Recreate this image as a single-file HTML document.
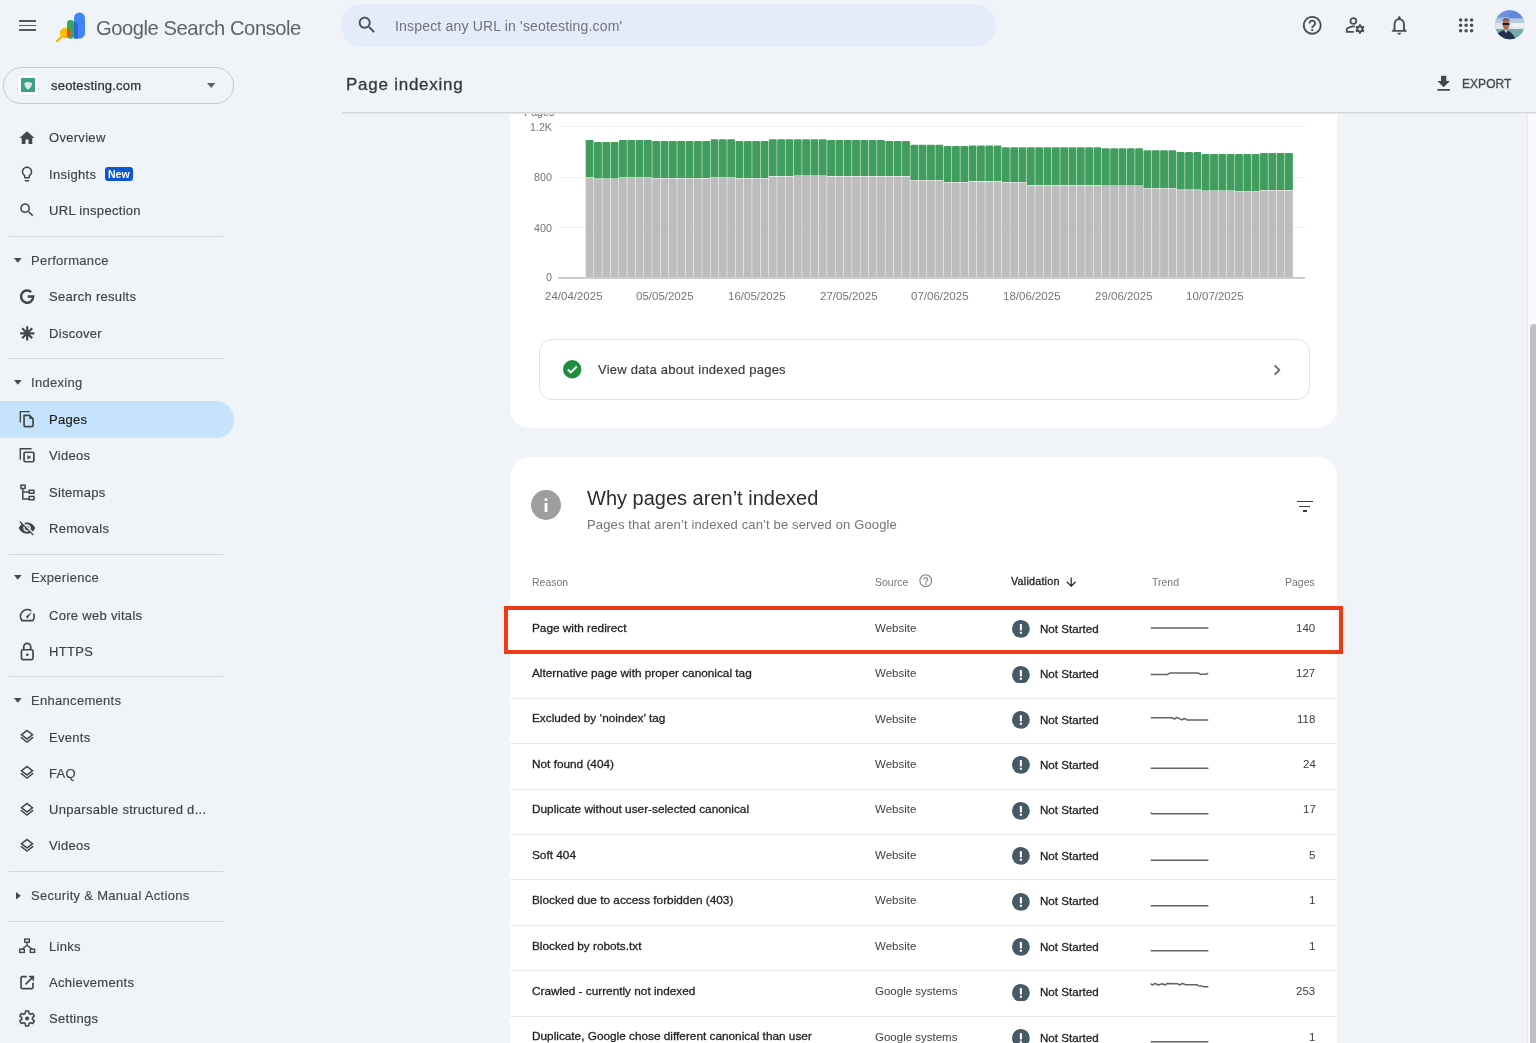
<!DOCTYPE html><html><head><meta charset="utf-8"><title>Page indexing</title><style>
html,body{margin:0;padding:0;}
body{width:1536px;height:1043px;overflow:hidden;background:#f0f4f9;font-family:"Liberation Sans", sans-serif;position:relative;}
.t{position:absolute;white-space:nowrap;will-change:transform;}
.r{position:absolute;}
</style></head><body>
<div class="r" style="left:19.00px;top:20.00px;width:16.50px;height:1.80px;background:#54575b;"></div>
<div class="r" style="left:19.00px;top:24.60px;width:16.50px;height:1.80px;background:#54575b;"></div>
<div class="r" style="left:19.00px;top:29.20px;width:16.50px;height:1.80px;background:#54575b;"></div>
<svg class="r" style="left:56.00px;top:12.00px;" width="30.00" height="30.00" viewBox="0 0 30 30">
<defs><clipPath id="gcl"><rect x="11" y="8" width="7.2" height="18.7" rx="3.6"/></clipPath></defs>
<path d="M5.2 25 L1.2 29" stroke="#f4b400" stroke-width="2.3" stroke-linecap="round"/>
<rect x="11" y="8" width="7.2" height="18.7" rx="3.6" fill="#34a853"/>
<rect x="18" y="0.4" width="11" height="26.3" rx="5.5" fill="#4285f4"/>
<path d="M18 9.2 Q21.6 10.5 22 14 V26.7 H18 Z" fill="#3266d5"/>
<circle cx="9.25" cy="21" r="5.35" fill="#fbbc04"/>
<circle cx="9.25" cy="21" r="5.35" fill="#ea4335" clip-path="url(#gcl)"/>
</svg>
<div class="t" style="left:96.00px;top:17.90px;font-size:20.2px;line-height:20.2px;color:#5f6368;letter-spacing:-0.45px;">Google Search Console</div>
<div class="r" style="left:341.00px;top:4.00px;width:655.00px;height:43.00px;background:#e4ebfa;border-radius:21.5px;"></div>
<svg class="r" style="left:356.00px;top:14.00px;" width="22.00" height="22.00" viewBox="0 0 24 24"><path fill="#4a4d51" d="M15.5 14h-.79l-.28-.27C15.41 12.59 16 11.11 16 9.5 16 5.91 13.09 3 9.5 3S3 5.91 3 9.5 5.91 16 9.5 16c1.61 0 3.09-.59 4.23-1.57l.27.28v.79l5 4.99L20.49 19l-4.99-5zm-6 0C7.01 14 5 11.99 5 9.5S7.01 5 9.5 5 14 7.01 14 9.5 11.99 14 9.5 14z"/></svg>
<div class="t" style="left:394.50px;top:19.15px;font-size:14px;line-height:14px;color:#6f7378;letter-spacing:0.18px;">Inspect any URL in 'seotesting.com'</div>
<svg class="r" style="left:1300.50px;top:14.00px;" width="22.50" height="22.50" viewBox="0 0 24 24"><path fill="#4a4d51" d="M11 18h2v-2h-2v2zm1-16C6.48 2 2 6.48 2 12s4.48 10 10 10 10-4.48 10-10S17.52 2 12 2zm0 18c-4.41 0-8-3.59-8-8s3.59-8 8-8 8 3.59 8 8-3.59 8-8 8zm0-14c-2.21 0-4 1.79-4 4h2c0-1.1.9-2 2-2s2 .9 2 2c0 2-3 1.75-3 5h2c0-2.25 3-2.5 3-5 0-2.21-1.79-4-4-4z"/></svg>
<svg class="r" style="left:1344.00px;top:14.00px;" width="22.50" height="22.50" viewBox="0 0 24 24"><g fill="none" stroke="#4a4d51" stroke-width="1.9">
<circle cx="10" cy="7.5" r="3.1"/>
<path d="M11.5 13.2 C8 12.8 5.5 14 3.6 15.2 C3 15.6 3 16.2 3 17 V19 H10.5"/>
</g>
<path fill="#4a4d51" d="M20.75 16c0-.22-.03-.42-.06-.63l1.14-1.01-1-1.73-1.45.49c-.32-.27-.68-.48-1.08-.63L18 11h-2l-.3 1.49c-.4.15-.76.36-1.08.63l-1.45-.49-1 1.73 1.14 1.01c-.03.21-.06.41-.06.63s.03.42.06.63l-1.14 1.01 1 1.730 1.45-.49c.32.27.68.48 1.08.63L16 21h2l.3-1.49c.4-.15.76-.36 1.08-.63l1.45.49 1-1.73-1.14-1.01c.03-.21.06-.41.06-.63zM17 17.6c-.88 0-1.6-.72-1.6-1.6s.72-1.6 1.6-1.6 1.6.72 1.6 1.6-.72 1.6-1.6 1.6z"/></svg>
<svg class="r" style="left:1388.00px;top:14.00px;" width="22.50" height="22.50" viewBox="0 0 24 24"><path fill="#4a4d51" d="M12 22c1.1 0 2-.9 2-2h-4c0 1.1.9 2 2 2zm6-6v-5c0-3.07-1.64-5.64-4.5-6.32V4c0-.83-.67-1.5-1.5-1.5s-1.5.67-1.5 1.5v.68C7.63 5.36 6 7.92 6 11v5l-2 2v1h16v-1l-2-2zm-2 1H8v-6c0-2.48 1.51-4.5 4-4.5s4 2.02 4 4.5v6z"/></svg>
<svg class="r" style="left:1455.00px;top:14.00px;" width="22.00" height="22.00" viewBox="0 0 22 22"><circle cx="5.60" cy="5.90" r="1.75" fill="#4a4d51"/><circle cx="11.10" cy="5.90" r="1.75" fill="#4a4d51"/><circle cx="16.60" cy="5.90" r="1.75" fill="#4a4d51"/><circle cx="5.60" cy="11.30" r="1.75" fill="#4a4d51"/><circle cx="11.10" cy="11.30" r="1.75" fill="#4a4d51"/><circle cx="16.60" cy="11.30" r="1.75" fill="#4a4d51"/><circle cx="5.60" cy="16.80" r="1.75" fill="#4a4d51"/><circle cx="11.10" cy="16.80" r="1.75" fill="#4a4d51"/><circle cx="16.60" cy="16.80" r="1.75" fill="#4a4d51"/></svg>
<svg class="r" style="left:1495.00px;top:10.40px;" width="29.50" height="29.50" viewBox="0 0 29.5 29.5"><defs><clipPath id="av"><circle cx="14.75" cy="14.75" r="14.6"/></clipPath></defs>
<g clip-path="url(#av)">
<rect width="30" height="30" fill="#8fb0dc"/>
<rect width="30" height="7" fill="#6d92e0"/>
<rect x="14" y="2" width="16" height="6" fill="#5f88de"/>
<rect y="9" width="30" height="4" fill="#b9c9de"/>
<rect y="13" width="30" height="6" fill="#dfe6ec"/>
<rect y="19" width="30" height="11" fill="#79a8b0"/>
<rect x="18" y="13" width="12" height="4" fill="#eef2f4"/>
<ellipse cx="11" cy="14.5" rx="3.4" ry="5.2" fill="#a8735c"/>
<path d="M7.6 11.5 Q11 7.6 14.4 11.5 L14.4 10 Q11 6.5 7.6 10Z" fill="#5a3d2c"/>
<rect x="7.6" y="13" width="6.8" height="2.1" rx="0.6" fill="#1d1d22"/>
<path d="M-1 30 C1 24 5 20.5 10 20 C14 20.5 18 23 21 30 Z" fill="#25304f"/>
<path d="M9 20 L11 23 L13 20.3Z" fill="#d9d2cc"/>
</g></svg>
<div class="r" style="left:2.50px;top:67.00px;width:231.00px;height:36.50px;box-sizing:border-box;border:1px solid #c6c8ca;border-radius:18.25px;"></div>
<div class="r" style="left:17.80px;top:74.80px;width:20.50px;height:20.50px;background:#fff;border-radius:2px;box-shadow:0 0 0 0.6px #e3e3e3;"></div>
<div class="r" style="left:21.00px;top:78.00px;width:14.30px;height:14.00px;background:#3d9f8a;"></div>
<svg class="r" style="left:21.00px;top:78.00px;" width="14.30" height="14.00" viewBox="0 0 14.3 14"><path d="M3.2 5.2 Q7.15 2.6 11.1 5.2 Q10.6 9.6 7.15 11.6 Q3.7 9.6 3.2 5.2Z" fill="#dfe7ea"/></svg>
<div class="t" style="left:50.60px;top:79.00px;font-size:13px;line-height:13px;color:#2e3033;letter-spacing:0.2px;-webkit-text-stroke:0.25px #2e3033;">seotesting.com</div>
<svg class="r" style="left:207.00px;top:83.00px;" width="8.40" height="5.00" viewBox="0 0 8.4 5"><path fill="#5f6368" d="M0 0H8.4L4.2 5Z"/></svg>
<div class="t" style="left:49.00px;top:131.40px;font-size:13px;line-height:13px;color:#3c4043;letter-spacing:0.3px;-webkit-text-stroke:0.15px #3c4043;">Overview</div>
<svg class="r" style="left:17.50px;top:128.80px;" width="18.00" height="18.00" viewBox="0 0 24 24"><path fill="#444746" d="M10 20v-6h4v6h5v-8h3L12 3 2 12h3v8z"/></svg>
<div class="t" style="left:49.00px;top:167.50px;font-size:13px;line-height:13px;color:#3c4043;letter-spacing:0.3px;-webkit-text-stroke:0.15px #3c4043;">Insights</div>
<svg class="r" style="left:17.50px;top:164.90px;" width="18.00" height="18.00" viewBox="0 0 24 24"><path fill="#444746" d="M9 21c0 .55.45 1 1 1h4c.55 0 1-.45 1-1v-1H9v1zm3-19C8.14 2 5 5.14 5 9c0 2.38 1.19 4.470 3 5.74V17c0 .55.45 1 1 1h6c.55 0 1-.45 1-1v-2.26c1.81-1.27 3-3.36 3-5.74 0-3.86-3.14-7-7-7zm2.85 11.1l-.85.6V16h-4v-2.3l-.85-.6C7.8 12.16 7 10.63 7 9c0-2.76 2.24-5 5-5s5 2.24 5 5c0 1.63-.8 3.16-2.15 4.1z"/></svg>
<div class="r" style="left:105.30px;top:167.00px;width:27.80px;height:14.20px;background:#0b57d0;border-radius:3px;"></div>
<div class="t" style="left:108.30px;top:169.31px;font-size:10.5px;line-height:10.5px;color:#fff;font-weight:bold;">New</div>
<div class="t" style="left:49.00px;top:204.00px;font-size:13px;line-height:13px;color:#3c4043;letter-spacing:0.3px;-webkit-text-stroke:0.15px #3c4043;">URL inspection</div>
<svg class="r" style="left:17.50px;top:201.40px;" width="18.00" height="18.00" viewBox="0 0 24 24"><path fill="#444746" d="M15.5 14h-.79l-.28-.27C15.41 12.59 16 11.11 16 9.5 16 5.91 13.09 3 9.5 3S3 5.91 3 9.5 5.91 16 9.5 16c1.61 0 3.09-.59 4.23-1.57l.27.28v.79l5 4.99L20.49 19l-4.99-5zm-6 0C7.01 14 5 11.99 5 9.5S7.01 5 9.5 5 14 7.01 14 9.5 11.99 14 9.5 14z"/></svg>
<div class="r" style="left:9.00px;top:235.75px;width:214.00px;height:1.00px;background:#d3d6da;"></div>
<div class="t" style="left:31.25px;top:253.80px;font-size:13px;line-height:13px;color:#444746;letter-spacing:0.3px;-webkit-text-stroke:0.15px #444746;">Performance</div>
<svg class="r" style="left:14.20px;top:257.60px;" width="7.60" height="5.00" viewBox="0 0 7.6 5"><path fill="#444746" d="M0 0H7.6L3.8 4.8Z"/></svg>
<div class="t" style="left:49.00px;top:290.20px;font-size:13px;line-height:13px;color:#3c4043;letter-spacing:0.3px;-webkit-text-stroke:0.15px #3c4043;">Search results</div>
<svg class="r" style="left:14.00px;top:281.20px;" width="26.00" height="26.00" viewBox="0 0 26 26"><path fill="none" stroke="#444746" stroke-width="2.5" d="M17.18 11.07 A6.1 6.1 0 1 0 19.20 15.60 H13.70"/></svg>
<div class="t" style="left:49.00px;top:326.60px;font-size:13px;line-height:13px;color:#3c4043;letter-spacing:0.3px;-webkit-text-stroke:0.15px #3c4043;">Discover</div>
<svg class="r" style="left:14.00px;top:317.60px;" width="26.00" height="26.00" viewBox="0 0 26 26"><path stroke="#444746" stroke-width="2.2" d="M20.30 15.30L6.10 15.30M18.22 20.32L8.18 10.28M13.20 22.40L13.20 8.20M8.18 20.32L18.22 10.28"/><circle cx="13.2" cy="15.3" r="2.6" fill="#444746"/></svg>
<div class="r" style="left:9.00px;top:358.30px;width:214.00px;height:1.00px;background:#d3d6da;"></div>
<div class="t" style="left:31.25px;top:376.30px;font-size:13px;line-height:13px;color:#444746;letter-spacing:0.3px;-webkit-text-stroke:0.15px #444746;">Indexing</div>
<svg class="r" style="left:14.20px;top:380.10px;" width="7.60" height="5.00" viewBox="0 0 7.6 5"><path fill="#444746" d="M0 0H7.6L3.8 4.8Z"/></svg>
<div class="r" style="left:0.00px;top:401.25px;width:234.40px;height:36.25px;background:#c6e3fd;border-radius:0 18px 18px 0;"></div>
<div class="t" style="left:49.00px;top:412.70px;font-size:13px;line-height:13px;color:#1f1f1f;letter-spacing:0.3px;-webkit-text-stroke:0.2px #1f1f1f;">Pages</div>
<svg class="r" style="left:14.00px;top:403.70px;" width="26.00" height="26.00" viewBox="0 0 26 26"><g fill="none" stroke="#444746" stroke-width="1.7" stroke-linejoin="round"><path d="M6.3 18.6 V7.6 H15.8" stroke-width="1.4"/><path d="M10.05 11.35 H15.6 L19.05 14.8 V21.3 Q19.05 22.65 17.7 22.65 H11.4 Q10.05 22.65 10.05 21.3 Z"/></g><path d="M15.3 11.2 L19.2 15.1 H15.3Z" fill="#444746"/></svg>
<div class="t" style="left:49.00px;top:449.00px;font-size:13px;line-height:13px;color:#3c4043;letter-spacing:0.3px;-webkit-text-stroke:0.15px #3c4043;">Videos</div>
<svg class="r" style="left:14.00px;top:440.00px;" width="26.00" height="26.00" viewBox="0 0 26 26"><g fill="none" stroke="#444746" stroke-width="1.7"><path d="M6.3 19.7 V8.8 H17.6" stroke-width="1.4"/><rect x="10.05" y="12.25" width="9.8" height="9.5" rx="1.3"/></g><path d="M13.5 15.1 L17.3 17.25 L13.5 19.4 Z" fill="#444746"/></svg>
<div class="t" style="left:49.00px;top:485.50px;font-size:13px;line-height:13px;color:#3c4043;letter-spacing:0.3px;-webkit-text-stroke:0.15px #3c4043;">Sitemaps</div>
<svg class="r" style="left:14.00px;top:476.50px;" width="26.00" height="26.00" viewBox="0 0 26 26"><g fill="none" stroke="#444746" stroke-width="1.5"><rect x="6.95" y="8.15" width="4.1" height="3.3"/><rect x="15.25" y="13.25" width="4.7" height="3.0"/><rect x="15.25" y="19.45" width="4.7" height="3.3"/><path d="M8.8 11.5 V22 H15.2 M8.8 14.9 H15.2"/></g></svg>
<div class="t" style="left:49.00px;top:521.80px;font-size:13px;line-height:13px;color:#3c4043;letter-spacing:0.3px;-webkit-text-stroke:0.15px #3c4043;">Removals</div>
<svg class="r" style="left:17.50px;top:519.20px;" width="18.00" height="18.00" viewBox="0 0 24 24"><path fill="#444746" d="M12 7c2.76 0 5 2.24 5 5 0 .65-.13 1.26-.36 1.83l2.92 2.92c1.51-1.26 2.7-2.89 3.43-4.75-1.73-4.39-6-7.5-11-7.5-1.4 0-2.74.25-3.98.7l2.16 2.16C10.74 7.13 11.35 7 12 7zM2 4.27l2.28 2.28.46.46C3.08 8.3 1.78 10.02 1 12c1.73 4.39 6 7.5 11 7.5 1.55 0 3.03-.3 4.38-.84l.42.42L19.730 22 21 20.73 3.27 3 2 4.27zM7.53 9.8l1.55 1.55c-.05.21-.08.43-.08.65 0 1.66 1.34 3 3 3 .22 0 .44-.03.65-.08l1.55 1.55c-.67.33-1.41.53-2.2.53-2.76 0-5-2.24-5-5 0-.79.2-1.53.53-2.2zm4.31-.78l3.15 3.15.02-.16c0-1.66-1.34-3-3-3l-.17.01z"/></svg>
<div class="r" style="left:9.00px;top:553.70px;width:214.00px;height:1.00px;background:#d3d6da;"></div>
<div class="t" style="left:31.25px;top:571.40px;font-size:13px;line-height:13px;color:#444746;letter-spacing:0.3px;-webkit-text-stroke:0.15px #444746;">Experience</div>
<svg class="r" style="left:14.20px;top:575.20px;" width="7.60" height="5.00" viewBox="0 0 7.6 5"><path fill="#444746" d="M0 0H7.6L3.8 4.8Z"/></svg>
<div class="t" style="left:49.00px;top:608.50px;font-size:13px;line-height:13px;color:#3c4043;letter-spacing:0.3px;-webkit-text-stroke:0.15px #3c4043;">Core web vitals</div>
<svg class="r" style="left:14.00px;top:599.50px;" width="26.00" height="26.00" viewBox="0 0 26 26"><path fill="none" stroke="#444746" stroke-width="1.7" stroke-linejoin="round" d="M17.25 10.88 A6.8 6.8 0 0 0 7.99 20.65 H18.71 A6.8 6.8 0 0 0 19.51 13.58"/><path fill="#444746" d="M12.2 16.3 L17.9 11.9 L13.9 17.9 A1.2 1.2 0 0 1 12.2 16.3Z"/></svg>
<div class="t" style="left:49.00px;top:644.50px;font-size:13px;line-height:13px;color:#3c4043;letter-spacing:0.3px;-webkit-text-stroke:0.15px #3c4043;">HTTPS</div>
<svg class="r" style="left:14.00px;top:635.50px;" width="26.00" height="26.00" viewBox="0 0 26 26"><g fill="none" stroke="#444746" stroke-width="1.7"><rect x="7.45" y="13.75" width="11.6" height="9.8" rx="1.5"/><path d="M9.75 13.75 V10.85 A3.5 3.5 0 0 1 16.75 10.85 V13.75"/></g><circle cx="13.3" cy="18.7" r="1.3" fill="#444746"/></svg>
<div class="r" style="left:9.00px;top:675.90px;width:214.00px;height:1.00px;background:#d3d6da;"></div>
<div class="t" style="left:31.25px;top:694.40px;font-size:13px;line-height:13px;color:#444746;letter-spacing:0.3px;-webkit-text-stroke:0.15px #444746;">Enhancements</div>
<svg class="r" style="left:14.20px;top:698.20px;" width="7.60" height="5.00" viewBox="0 0 7.6 5"><path fill="#444746" d="M0 0H7.6L3.8 4.8Z"/></svg>
<div class="t" style="left:49.00px;top:730.80px;font-size:13px;line-height:13px;color:#3c4043;letter-spacing:0.3px;-webkit-text-stroke:0.15px #3c4043;">Events</div>
<svg class="r" style="left:17.50px;top:728.20px;" width="18.00" height="18.00" viewBox="0 0 24 24"><path fill="#444746" d="M12 16l7.36-5.73L21 9l-9-7-9 7 1.63 1.27L12 16zm0-11.47L17.74 9 12 13.47 6.26 9 12 4.53zm-.01 13.01l-7.37-5.73L3 13.07l9 7 9-7-1.63-1.27-7.38 5.74z"/></svg>
<div class="t" style="left:49.00px;top:766.80px;font-size:13px;line-height:13px;color:#3c4043;letter-spacing:0.3px;-webkit-text-stroke:0.15px #3c4043;">FAQ</div>
<svg class="r" style="left:17.50px;top:764.20px;" width="18.00" height="18.00" viewBox="0 0 24 24"><path fill="#444746" d="M12 16l7.36-5.73L21 9l-9-7-9 7 1.63 1.27L12 16zm0-11.47L17.74 9 12 13.47 6.26 9 12 4.53zm-.01 13.01l-7.37-5.73L3 13.07l9 7 9-7-1.63-1.27-7.38 5.74z"/></svg>
<div class="t" style="left:49.00px;top:803.30px;font-size:13px;line-height:13px;color:#3c4043;letter-spacing:0.3px;-webkit-text-stroke:0.15px #3c4043;">Unparsable structured d...</div>
<svg class="r" style="left:17.50px;top:800.70px;" width="18.00" height="18.00" viewBox="0 0 24 24"><path fill="#444746" d="M12 16l7.36-5.73L21 9l-9-7-9 7 1.63 1.27L12 16zm0-11.47L17.74 9 12 13.47 6.26 9 12 4.53zm-.01 13.01l-7.37-5.73L3 13.07l9 7 9-7-1.63-1.27-7.38 5.74z"/></svg>
<div class="t" style="left:49.00px;top:839.20px;font-size:13px;line-height:13px;color:#3c4043;letter-spacing:0.3px;-webkit-text-stroke:0.15px #3c4043;">Videos</div>
<svg class="r" style="left:17.50px;top:836.60px;" width="18.00" height="18.00" viewBox="0 0 24 24"><path fill="#444746" d="M12 16l7.36-5.73L21 9l-9-7-9 7 1.63 1.27L12 16zm0-11.47L17.74 9 12 13.47 6.26 9 12 4.53zm-.01 13.01l-7.37-5.73L3 13.07l9 7 9-7-1.63-1.27-7.38 5.74z"/></svg>
<div class="r" style="left:9.00px;top:871.20px;width:214.00px;height:1.00px;background:#d3d6da;"></div>
<div class="t" style="left:31.25px;top:889.40px;font-size:13px;line-height:13px;color:#444746;letter-spacing:0.3px;-webkit-text-stroke:0.15px #444746;">Security &amp; Manual Actions</div>
<svg class="r" style="left:16.20px;top:891.70px;" width="5.00" height="7.60" viewBox="0 0 5 7.6"><path fill="#444746" d="M0 0V7.6L4.8 3.8Z"/></svg>
<div class="r" style="left:9.00px;top:921.20px;width:214.00px;height:1.00px;background:#d3d6da;"></div>
<div class="t" style="left:49.00px;top:939.60px;font-size:13px;line-height:13px;color:#3c4043;letter-spacing:0.3px;-webkit-text-stroke:0.15px #3c4043;">Links</div>
<svg class="r" style="left:14.00px;top:930.60px;" width="26.00" height="26.00" viewBox="0 0 26 26"><g fill="none" stroke="#444746" stroke-width="1.4"><rect x="10.7" y="8.1" width="4.6" height="3.1"/><rect x="5.7" y="18.2" width="4.6" height="3.2"/><rect x="16.3" y="18.2" width="4.3" height="3.2"/><path d="M13 11.2 V14.2 L8 18.2 M13 14.2 L18.4 18.2"/></g></svg>
<div class="t" style="left:49.00px;top:975.50px;font-size:13px;line-height:13px;color:#3c4043;letter-spacing:0.3px;-webkit-text-stroke:0.15px #3c4043;">Achievements</div>
<svg class="r" style="left:14.00px;top:966.50px;" width="26.00" height="26.00" viewBox="0 0 26 26"><g fill="none" stroke="#444746" stroke-width="1.7"><path d="M12.8 9.65 H8.4 Q7.05 9.65 7.05 11 V20.2 Q7.05 21.55 8.4 21.55 H17.6 Q18.95 21.55 18.95 20.2 V15.8"/><path d="M15.1 9.65 H19.25 V13.8 M19.25 9.65 L11.6 17.3"/></g></svg>
<div class="t" style="left:49.00px;top:1011.80px;font-size:13px;line-height:13px;color:#3c4043;letter-spacing:0.3px;-webkit-text-stroke:0.15px #3c4043;">Settings</div>
<svg class="r" style="left:14.00px;top:1002.80px;" width="26.00" height="26.00" viewBox="0 0 26 26"><path fill="none" stroke="#444746" stroke-width="1.6" stroke-linejoin="round" d="M11.20 10.45 L11.59 8.05 L14.61 8.05 L15.00 10.45 L16.53 11.33 L18.80 10.47 L20.31 13.08 L18.43 14.62 L18.43 16.38 L20.31 17.92 L18.80 20.53 L16.53 19.67 L15.00 20.55 L14.61 22.95 L11.59 22.95 L11.20 20.55 L9.67 19.67 L7.40 20.53 L5.89 17.92 L7.77 16.38 L7.77 14.62 L5.89 13.08 L7.40 10.47 L9.67 11.33Z"/><circle cx="13.1" cy="15.5" r="2.0" fill="#444746"/></svg>
<div class="r" style="left:510.00px;top:60.00px;width:827.00px;height:368.10px;background:#fff;border-radius:20px;"></div>
<div class="t" style="left:524.00px;top:107.44px;font-size:10.7px;line-height:10.7px;color:#5f6368;">Pages</div>
<div class="r" style="left:558.00px;top:126.40px;width:747.00px;height:1.00px;background:#f0f0f0;"></div>
<div class="r" style="left:558.00px;top:176.50px;width:747.00px;height:1.00px;background:#f0f0f0;"></div>
<div class="r" style="left:558.00px;top:226.80px;width:747.00px;height:1.00px;background:#f0f0f0;"></div>
<div class="t" style="right:983.70px;top:121.94px;font-size:10.7px;line-height:10.7px;color:#757575;text-align:right;">1.2K</div>
<div class="t" style="right:983.70px;top:171.64px;font-size:10.7px;line-height:10.7px;color:#757575;text-align:right;">800</div>
<div class="t" style="right:983.70px;top:222.54px;font-size:10.7px;line-height:10.7px;color:#757575;text-align:right;">400</div>
<div class="t" style="right:983.70px;top:272.34px;font-size:10.7px;line-height:10.7px;color:#757575;text-align:right;">0</div>
<svg class="r" style="left:0;top:0" width="1536" height="300" viewBox="0 0 1536 300"><path d="M585.70 177.00V141.30Q585.70 140.10 586.90 140.10H592.35Q593.55 140.10 593.55 141.30V177.00Z" fill="#409d5d"/><rect x="585.70" y="177.50" width="7.85" height="100.40" fill="#bdbdbd"/><path d="M594.03 178.60V143.20Q594.03 142.00 595.23 142.00H600.68Q601.88 142.00 601.88 143.20V178.60Z" fill="#409d5d"/><rect x="594.03" y="179.10" width="7.85" height="98.80" fill="#bdbdbd"/><path d="M602.35 178.60V143.20Q602.35 142.00 603.55 142.00H609.00Q610.20 142.00 610.20 143.20V178.60Z" fill="#409d5d"/><rect x="602.35" y="179.10" width="7.85" height="98.80" fill="#bdbdbd"/><path d="M610.68 178.60V143.20Q610.68 142.00 611.88 142.00H617.33Q618.53 142.00 618.53 143.20V178.60Z" fill="#409d5d"/><rect x="610.68" y="179.10" width="7.85" height="98.80" fill="#bdbdbd"/><path d="M619.00 177.20V141.30Q619.00 140.10 620.20 140.10H625.65Q626.85 140.10 626.85 141.30V177.20Z" fill="#409d5d"/><rect x="619.00" y="177.70" width="7.85" height="100.20" fill="#bdbdbd"/><path d="M627.33 177.20V141.30Q627.33 140.10 628.53 140.10H633.98Q635.18 140.10 635.18 141.30V177.20Z" fill="#409d5d"/><rect x="627.33" y="177.70" width="7.85" height="100.20" fill="#bdbdbd"/><path d="M635.65 177.20V141.30Q635.65 140.10 636.85 140.10H642.30Q643.50 140.10 643.50 141.30V177.20Z" fill="#409d5d"/><rect x="635.65" y="177.70" width="7.85" height="100.20" fill="#bdbdbd"/><path d="M643.98 177.20V141.30Q643.98 140.10 645.18 140.10H650.62Q651.83 140.10 651.83 141.30V177.20Z" fill="#409d5d"/><rect x="643.98" y="177.70" width="7.85" height="100.20" fill="#bdbdbd"/><path d="M652.30 178.00V142.30Q652.30 141.10 653.50 141.10H658.95Q660.15 141.10 660.15 142.30V178.00Z" fill="#409d5d"/><rect x="652.30" y="178.50" width="7.85" height="99.40" fill="#bdbdbd"/><path d="M660.62 178.00V142.30Q660.62 141.10 661.83 141.10H667.27Q668.48 141.10 668.48 142.30V178.00Z" fill="#409d5d"/><rect x="660.62" y="178.50" width="7.85" height="99.40" fill="#bdbdbd"/><path d="M668.95 178.00V142.30Q668.95 141.10 670.15 141.10H675.60Q676.80 141.10 676.80 142.30V178.00Z" fill="#409d5d"/><rect x="668.95" y="178.50" width="7.85" height="99.40" fill="#bdbdbd"/><path d="M677.28 178.00V142.30Q677.28 141.10 678.48 141.10H683.93Q685.13 141.10 685.13 142.30V178.00Z" fill="#409d5d"/><rect x="677.28" y="178.50" width="7.85" height="99.40" fill="#bdbdbd"/><path d="M685.60 178.00V142.30Q685.60 141.10 686.80 141.10H692.25Q693.45 141.10 693.45 142.30V178.00Z" fill="#409d5d"/><rect x="685.60" y="178.50" width="7.85" height="99.40" fill="#bdbdbd"/><path d="M693.93 178.00V142.30Q693.93 141.10 695.13 141.10H700.58Q701.78 141.10 701.78 142.30V178.00Z" fill="#409d5d"/><rect x="693.93" y="178.50" width="7.85" height="99.40" fill="#bdbdbd"/><path d="M702.25 178.00V142.30Q702.25 141.10 703.45 141.10H708.90Q710.10 141.10 710.10 142.30V178.00Z" fill="#409d5d"/><rect x="702.25" y="178.50" width="7.85" height="99.40" fill="#bdbdbd"/><path d="M710.58 177.20V140.50Q710.58 139.30 711.78 139.30H717.23Q718.43 139.30 718.43 140.50V177.20Z" fill="#409d5d"/><rect x="710.58" y="177.70" width="7.85" height="100.20" fill="#bdbdbd"/><path d="M718.90 177.20V140.50Q718.90 139.30 720.10 139.30H725.55Q726.75 139.30 726.75 140.50V177.20Z" fill="#409d5d"/><rect x="718.90" y="177.70" width="7.85" height="100.20" fill="#bdbdbd"/><path d="M727.23 177.20V140.50Q727.23 139.30 728.43 139.30H733.88Q735.08 139.30 735.08 140.50V177.20Z" fill="#409d5d"/><rect x="727.23" y="177.70" width="7.85" height="100.20" fill="#bdbdbd"/><path d="M735.55 178.00V142.30Q735.55 141.10 736.75 141.10H742.20Q743.40 141.10 743.40 142.30V178.00Z" fill="#409d5d"/><rect x="735.55" y="178.50" width="7.85" height="99.40" fill="#bdbdbd"/><path d="M743.88 178.00V142.30Q743.88 141.10 745.08 141.10H750.52Q751.73 141.10 751.73 142.30V178.00Z" fill="#409d5d"/><rect x="743.88" y="178.50" width="7.85" height="99.40" fill="#bdbdbd"/><path d="M752.20 178.00V142.30Q752.20 141.10 753.40 141.10H758.85Q760.05 141.10 760.05 142.30V178.00Z" fill="#409d5d"/><rect x="752.20" y="178.50" width="7.85" height="99.40" fill="#bdbdbd"/><path d="M760.53 178.00V142.30Q760.53 141.10 761.73 141.10H767.18Q768.38 141.10 768.38 142.30V178.00Z" fill="#409d5d"/><rect x="760.53" y="178.50" width="7.85" height="99.40" fill="#bdbdbd"/><path d="M768.85 176.10V140.50Q768.85 139.30 770.05 139.30H775.50Q776.70 139.30 776.70 140.50V176.10Z" fill="#409d5d"/><rect x="768.85" y="176.60" width="7.85" height="101.30" fill="#bdbdbd"/><path d="M777.18 176.10V140.50Q777.18 139.30 778.38 139.30H783.83Q785.03 139.30 785.03 140.50V176.10Z" fill="#409d5d"/><rect x="777.18" y="176.60" width="7.85" height="101.30" fill="#bdbdbd"/><path d="M785.50 176.10V140.50Q785.50 139.30 786.70 139.30H792.15Q793.35 139.30 793.35 140.50V176.10Z" fill="#409d5d"/><rect x="785.50" y="176.60" width="7.85" height="101.30" fill="#bdbdbd"/><path d="M793.83 175.40V140.50Q793.83 139.30 795.03 139.30H800.48Q801.68 139.30 801.68 140.50V175.40Z" fill="#409d5d"/><rect x="793.83" y="175.90" width="7.85" height="102.00" fill="#bdbdbd"/><path d="M802.15 175.40V140.50Q802.15 139.30 803.35 139.30H808.80Q810.00 139.30 810.00 140.50V175.40Z" fill="#409d5d"/><rect x="802.15" y="175.90" width="7.85" height="102.00" fill="#bdbdbd"/><path d="M810.48 175.40V140.50Q810.48 139.30 811.68 139.30H817.12Q818.33 139.30 818.33 140.50V175.40Z" fill="#409d5d"/><rect x="810.48" y="175.90" width="7.85" height="102.00" fill="#bdbdbd"/><path d="M818.80 175.40V140.50Q818.80 139.30 820.00 139.30H825.45Q826.65 139.30 826.65 140.50V175.40Z" fill="#409d5d"/><rect x="818.80" y="175.90" width="7.85" height="102.00" fill="#bdbdbd"/><path d="M827.12 176.10V141.30Q827.12 140.10 828.33 140.10H833.77Q834.98 140.10 834.98 141.30V176.10Z" fill="#409d5d"/><rect x="827.12" y="176.60" width="7.85" height="101.30" fill="#bdbdbd"/><path d="M835.45 176.10V141.30Q835.45 140.10 836.65 140.10H842.10Q843.30 140.10 843.30 141.30V176.10Z" fill="#409d5d"/><rect x="835.45" y="176.60" width="7.85" height="101.30" fill="#bdbdbd"/><path d="M843.78 176.10V141.30Q843.78 140.10 844.98 140.10H850.43Q851.63 140.10 851.63 141.30V176.10Z" fill="#409d5d"/><rect x="843.78" y="176.60" width="7.85" height="101.30" fill="#bdbdbd"/><path d="M852.10 176.10V141.30Q852.10 140.10 853.30 140.10H858.75Q859.95 140.10 859.95 141.30V176.10Z" fill="#409d5d"/><rect x="852.10" y="176.60" width="7.85" height="101.30" fill="#bdbdbd"/><path d="M860.42 176.10V141.30Q860.42 140.10 861.62 140.10H867.07Q868.27 140.10 868.27 141.30V176.10Z" fill="#409d5d"/><rect x="860.42" y="176.60" width="7.85" height="101.30" fill="#bdbdbd"/><path d="M868.75 176.10V141.30Q868.75 140.10 869.95 140.10H875.40Q876.60 140.10 876.60 141.30V176.10Z" fill="#409d5d"/><rect x="868.75" y="176.60" width="7.85" height="101.30" fill="#bdbdbd"/><path d="M877.08 176.10V141.30Q877.08 140.10 878.28 140.10H883.73Q884.93 140.10 884.93 141.30V176.10Z" fill="#409d5d"/><rect x="877.08" y="176.60" width="7.85" height="101.30" fill="#bdbdbd"/><path d="M885.40 176.10V142.30Q885.40 141.10 886.60 141.10H892.05Q893.25 141.10 893.25 142.30V176.10Z" fill="#409d5d"/><rect x="885.40" y="176.60" width="7.85" height="101.30" fill="#bdbdbd"/><path d="M893.73 176.10V142.30Q893.73 141.10 894.93 141.10H900.38Q901.58 141.10 901.58 142.30V176.10Z" fill="#409d5d"/><rect x="893.73" y="176.60" width="7.85" height="101.30" fill="#bdbdbd"/><path d="M902.05 176.10V142.30Q902.05 141.10 903.25 141.10H908.70Q909.90 141.10 909.90 142.30V176.10Z" fill="#409d5d"/><rect x="902.05" y="176.60" width="7.85" height="101.30" fill="#bdbdbd"/><path d="M910.38 179.90V146.00Q910.38 144.80 911.58 144.80H917.02Q918.23 144.80 918.23 146.00V179.90Z" fill="#409d5d"/><rect x="910.38" y="180.40" width="7.85" height="97.50" fill="#bdbdbd"/><path d="M918.70 179.90V146.00Q918.70 144.80 919.90 144.80H925.35Q926.55 144.80 926.55 146.00V179.90Z" fill="#409d5d"/><rect x="918.70" y="180.40" width="7.85" height="97.50" fill="#bdbdbd"/><path d="M927.03 179.90V146.00Q927.03 144.80 928.23 144.80H933.68Q934.88 144.80 934.88 146.00V179.90Z" fill="#409d5d"/><rect x="927.03" y="180.40" width="7.85" height="97.50" fill="#bdbdbd"/><path d="M935.35 179.90V146.00Q935.35 144.80 936.55 144.80H942.00Q943.20 144.80 943.20 146.00V179.90Z" fill="#409d5d"/><rect x="935.35" y="180.40" width="7.85" height="97.50" fill="#bdbdbd"/><path d="M943.67 182.00V147.30Q943.67 146.10 944.88 146.10H950.32Q951.52 146.10 951.52 147.30V182.00Z" fill="#409d5d"/><rect x="943.67" y="182.50" width="7.85" height="95.40" fill="#bdbdbd"/><path d="M952.00 182.00V147.30Q952.00 146.10 953.20 146.10H958.65Q959.85 146.10 959.85 147.30V182.00Z" fill="#409d5d"/><rect x="952.00" y="182.50" width="7.85" height="95.40" fill="#bdbdbd"/><path d="M960.33 182.00V147.30Q960.33 146.10 961.53 146.10H966.98Q968.18 146.10 968.18 147.30V182.00Z" fill="#409d5d"/><rect x="960.33" y="182.50" width="7.85" height="95.40" fill="#bdbdbd"/><path d="M968.65 181.10V146.70Q968.65 145.50 969.85 145.50H975.30Q976.50 145.50 976.50 146.70V181.10Z" fill="#409d5d"/><rect x="968.65" y="181.60" width="7.85" height="96.30" fill="#bdbdbd"/><path d="M976.98 181.10V146.70Q976.98 145.50 978.18 145.50H983.62Q984.83 145.50 984.83 146.70V181.10Z" fill="#409d5d"/><rect x="976.98" y="181.60" width="7.85" height="96.30" fill="#bdbdbd"/><path d="M985.30 181.10V146.70Q985.30 145.50 986.50 145.50H991.95Q993.15 145.50 993.15 146.70V181.10Z" fill="#409d5d"/><rect x="985.30" y="181.60" width="7.85" height="96.30" fill="#bdbdbd"/><path d="M993.62 181.10V146.70Q993.62 145.50 994.83 145.50H1000.27Q1001.48 145.50 1001.48 146.70V181.10Z" fill="#409d5d"/><rect x="993.62" y="181.60" width="7.85" height="96.30" fill="#bdbdbd"/><path d="M1001.95 182.00V148.50Q1001.95 147.30 1003.15 147.30H1008.60Q1009.80 147.30 1009.80 148.50V182.00Z" fill="#409d5d"/><rect x="1001.95" y="182.50" width="7.85" height="95.40" fill="#bdbdbd"/><path d="M1010.28 182.00V148.50Q1010.28 147.30 1011.48 147.30H1016.93Q1018.13 147.30 1018.13 148.50V182.00Z" fill="#409d5d"/><rect x="1010.28" y="182.50" width="7.85" height="95.40" fill="#bdbdbd"/><path d="M1018.60 182.00V148.50Q1018.60 147.30 1019.80 147.30H1025.25Q1026.45 147.30 1026.45 148.50V182.00Z" fill="#409d5d"/><rect x="1018.60" y="182.50" width="7.85" height="95.40" fill="#bdbdbd"/><path d="M1026.92 185.00V148.50Q1026.92 147.30 1028.12 147.30H1033.57Q1034.77 147.30 1034.77 148.50V185.00Z" fill="#409d5d"/><rect x="1026.92" y="185.50" width="7.85" height="92.40" fill="#bdbdbd"/><path d="M1035.25 185.00V148.50Q1035.25 147.30 1036.45 147.30H1041.90Q1043.10 147.30 1043.10 148.50V185.00Z" fill="#409d5d"/><rect x="1035.25" y="185.50" width="7.85" height="92.40" fill="#bdbdbd"/><path d="M1043.58 185.00V148.50Q1043.58 147.30 1044.78 147.30H1050.22Q1051.42 147.30 1051.42 148.50V185.00Z" fill="#409d5d"/><rect x="1043.58" y="185.50" width="7.85" height="92.40" fill="#bdbdbd"/><path d="M1051.90 185.00V148.50Q1051.90 147.30 1053.10 147.30H1058.55Q1059.75 147.30 1059.75 148.50V185.00Z" fill="#409d5d"/><rect x="1051.90" y="185.50" width="7.85" height="92.40" fill="#bdbdbd"/><path d="M1060.22 185.00V148.50Q1060.22 147.30 1061.42 147.30H1066.87Q1068.07 147.30 1068.07 148.50V185.00Z" fill="#409d5d"/><rect x="1060.22" y="185.50" width="7.85" height="92.40" fill="#bdbdbd"/><path d="M1068.55 185.00V148.50Q1068.55 147.30 1069.75 147.30H1075.20Q1076.40 147.30 1076.40 148.50V185.00Z" fill="#409d5d"/><rect x="1068.55" y="185.50" width="7.85" height="92.40" fill="#bdbdbd"/><path d="M1076.88 185.00V148.50Q1076.88 147.30 1078.08 147.30H1083.52Q1084.72 147.30 1084.72 148.50V185.00Z" fill="#409d5d"/><rect x="1076.88" y="185.50" width="7.85" height="92.40" fill="#bdbdbd"/><path d="M1085.20 185.00V148.50Q1085.20 147.30 1086.40 147.30H1091.85Q1093.05 147.30 1093.05 148.50V185.00Z" fill="#409d5d"/><rect x="1085.20" y="185.50" width="7.85" height="92.40" fill="#bdbdbd"/><path d="M1093.53 185.00V148.50Q1093.53 147.30 1094.73 147.30H1100.17Q1101.38 147.30 1101.38 148.50V185.00Z" fill="#409d5d"/><rect x="1093.53" y="185.50" width="7.85" height="92.40" fill="#bdbdbd"/><path d="M1101.85 185.50V149.50Q1101.85 148.30 1103.05 148.30H1108.50Q1109.70 148.30 1109.70 149.50V185.50Z" fill="#409d5d"/><rect x="1101.85" y="186.00" width="7.85" height="91.90" fill="#bdbdbd"/><path d="M1110.17 185.50V149.50Q1110.17 148.30 1111.38 148.30H1116.82Q1118.02 148.30 1118.02 149.50V185.50Z" fill="#409d5d"/><rect x="1110.17" y="186.00" width="7.85" height="91.90" fill="#bdbdbd"/><path d="M1118.50 185.50V149.50Q1118.50 148.30 1119.70 148.30H1125.15Q1126.35 148.30 1126.35 149.50V185.50Z" fill="#409d5d"/><rect x="1118.50" y="186.00" width="7.85" height="91.90" fill="#bdbdbd"/><path d="M1126.83 185.50V149.50Q1126.83 148.30 1128.03 148.30H1133.47Q1134.67 148.30 1134.67 149.50V185.50Z" fill="#409d5d"/><rect x="1126.83" y="186.00" width="7.85" height="91.90" fill="#bdbdbd"/><path d="M1135.15 185.50V149.50Q1135.15 148.30 1136.35 148.30H1141.80Q1143.00 148.30 1143.00 149.50V185.50Z" fill="#409d5d"/><rect x="1135.15" y="186.00" width="7.85" height="91.90" fill="#bdbdbd"/><path d="M1143.47 187.90V151.40Q1143.47 150.20 1144.67 150.20H1150.12Q1151.32 150.20 1151.32 151.40V187.90Z" fill="#409d5d"/><rect x="1143.47" y="188.40" width="7.85" height="89.50" fill="#bdbdbd"/><path d="M1151.80 187.90V151.40Q1151.80 150.20 1153.00 150.20H1158.45Q1159.65 150.20 1159.65 151.40V187.90Z" fill="#409d5d"/><rect x="1151.80" y="188.40" width="7.85" height="89.50" fill="#bdbdbd"/><path d="M1160.12 187.90V151.40Q1160.12 150.20 1161.33 150.20H1166.77Q1167.97 150.20 1167.97 151.40V187.90Z" fill="#409d5d"/><rect x="1160.12" y="188.40" width="7.85" height="89.50" fill="#bdbdbd"/><path d="M1168.45 187.90V151.40Q1168.45 150.20 1169.65 150.20H1175.10Q1176.30 150.20 1176.30 151.40V187.90Z" fill="#409d5d"/><rect x="1168.45" y="188.40" width="7.85" height="89.50" fill="#bdbdbd"/><path d="M1176.78 189.60V153.20Q1176.78 152.00 1177.98 152.00H1183.42Q1184.62 152.00 1184.62 153.20V189.60Z" fill="#409d5d"/><rect x="1176.78" y="190.10" width="7.85" height="87.80" fill="#bdbdbd"/><path d="M1185.10 189.60V153.20Q1185.10 152.00 1186.30 152.00H1191.75Q1192.95 152.00 1192.95 153.20V189.60Z" fill="#409d5d"/><rect x="1185.10" y="190.10" width="7.85" height="87.80" fill="#bdbdbd"/><path d="M1193.42 189.60V153.20Q1193.42 152.00 1194.62 152.00H1200.07Q1201.27 152.00 1201.27 153.20V189.60Z" fill="#409d5d"/><rect x="1193.42" y="190.10" width="7.85" height="87.80" fill="#bdbdbd"/><path d="M1201.75 190.40V155.10Q1201.75 153.90 1202.95 153.90H1208.40Q1209.60 153.90 1209.60 155.10V190.40Z" fill="#409d5d"/><rect x="1201.75" y="190.90" width="7.85" height="87.00" fill="#bdbdbd"/><path d="M1210.08 190.40V155.10Q1210.08 153.90 1211.28 153.90H1216.72Q1217.92 153.90 1217.92 155.10V190.40Z" fill="#409d5d"/><rect x="1210.08" y="190.90" width="7.85" height="87.00" fill="#bdbdbd"/><path d="M1218.40 190.40V155.10Q1218.40 153.90 1219.60 153.90H1225.05Q1226.25 153.90 1226.25 155.10V190.40Z" fill="#409d5d"/><rect x="1218.40" y="190.90" width="7.85" height="87.00" fill="#bdbdbd"/><path d="M1226.72 190.40V155.10Q1226.72 153.90 1227.92 153.90H1233.37Q1234.57 153.90 1234.57 155.10V190.40Z" fill="#409d5d"/><rect x="1226.72" y="190.90" width="7.85" height="87.00" fill="#bdbdbd"/><path d="M1235.05 191.20V155.10Q1235.05 153.90 1236.25 153.90H1241.70Q1242.90 153.90 1242.90 155.10V191.20Z" fill="#409d5d"/><rect x="1235.05" y="191.70" width="7.85" height="86.20" fill="#bdbdbd"/><path d="M1243.38 191.20V155.10Q1243.38 153.90 1244.58 153.90H1250.02Q1251.22 153.90 1251.22 155.10V191.20Z" fill="#409d5d"/><rect x="1243.38" y="191.70" width="7.85" height="86.20" fill="#bdbdbd"/><path d="M1251.70 191.20V155.10Q1251.70 153.90 1252.90 153.90H1258.35Q1259.55 153.90 1259.55 155.10V191.20Z" fill="#409d5d"/><rect x="1251.70" y="191.70" width="7.85" height="86.20" fill="#bdbdbd"/><path d="M1260.03 190.00V154.10Q1260.03 152.90 1261.23 152.90H1266.67Q1267.88 152.90 1267.88 154.10V190.00Z" fill="#409d5d"/><rect x="1260.03" y="190.50" width="7.85" height="87.40" fill="#bdbdbd"/><path d="M1268.35 190.00V154.10Q1268.35 152.90 1269.55 152.90H1275.00Q1276.20 152.90 1276.20 154.10V190.00Z" fill="#409d5d"/><rect x="1268.35" y="190.50" width="7.85" height="87.40" fill="#bdbdbd"/><path d="M1276.67 190.00V154.10Q1276.67 152.90 1277.88 152.90H1283.32Q1284.52 152.90 1284.52 154.10V190.00Z" fill="#409d5d"/><rect x="1276.67" y="190.50" width="7.85" height="87.40" fill="#bdbdbd"/><path d="M1285.00 190.00V154.10Q1285.00 152.90 1286.20 152.90H1291.65Q1292.85 152.90 1292.85 154.10V190.00Z" fill="#409d5d"/><rect x="1285.00" y="190.50" width="7.85" height="87.40" fill="#bdbdbd"/></svg>
<div class="r" style="left:558.00px;top:277.15px;width:747.00px;height:1.50px;background:#cdcdcd;"></div>
<div class="t" style="left:544.70px;top:290.87px;font-size:11.5px;line-height:11.5px;color:#757575;">24/04/2025</div>
<div class="t" style="left:636.37px;top:290.87px;font-size:11.5px;line-height:11.5px;color:#757575;">05/05/2025</div>
<div class="t" style="left:728.04px;top:290.87px;font-size:11.5px;line-height:11.5px;color:#757575;">16/05/2025</div>
<div class="t" style="left:819.71px;top:290.87px;font-size:11.5px;line-height:11.5px;color:#757575;">27/05/2025</div>
<div class="t" style="left:911.38px;top:290.87px;font-size:11.5px;line-height:11.5px;color:#757575;">07/06/2025</div>
<div class="t" style="left:1003.05px;top:290.87px;font-size:11.5px;line-height:11.5px;color:#757575;">18/06/2025</div>
<div class="t" style="left:1094.72px;top:290.87px;font-size:11.5px;line-height:11.5px;color:#757575;">29/06/2025</div>
<div class="t" style="left:1186.39px;top:290.87px;font-size:11.5px;line-height:11.5px;color:#757575;">10/07/2025</div>
<div class="r" style="left:538.70px;top:339.20px;width:771.00px;height:60.60px;box-sizing:border-box;border:1px solid #e1e3e6;border-radius:13px;"></div>
<svg class="r" style="left:563.20px;top:360.20px;" width="18.40" height="18.40" viewBox="0 0 24 24"><circle cx="12" cy="12" r="12" fill="#1e8e3e"/><path d="M6.3 12.4 L10.2 16.2 L18 8.4" fill="none" stroke="#fff" stroke-width="2.6"/></svg>
<div class="t" style="left:598.20px;top:362.70px;font-size:13px;line-height:13px;color:#3a3c3f;letter-spacing:0.23px;-webkit-text-stroke:0.2px #3a3c3f;">View data about indexed pages</div>
<svg class="r" style="left:1269.00px;top:362.00px;" width="16.00" height="16.00" viewBox="3 3 18 18"><path fill="#5f6368" d="M10 6L8.59 7.41 13.17 12l-4.58 4.59L10 18l6-6z"/></svg>
<div class="r" style="left:342.00px;top:48.00px;width:1194.00px;height:64.50px;background:#f0f4f9;"></div>
<div class="r" style="left:342.00px;top:112.00px;width:1194.00px;height:1.00px;background:#d7d9dc;"></div>
<div class="r" style="left:342.00px;top:113.00px;width:1194.00px;height:1.00px;background:#e2e5e9;"></div>
<div class="t" style="left:346.00px;top:76.11px;font-size:17px;line-height:17px;color:#37393c;letter-spacing:0.75px;-webkit-text-stroke:0.3px #37393c;">Page indexing</div>
<svg class="r" style="left:1432.50px;top:72.90px;" width="21.40" height="21.40" viewBox="0 0 24 24"><path fill="#444746" d="M19 9h-4V3H9v6H5l7 7 7-7zM5 18v2h14v-2H5z"/></svg>
<div class="t" style="left:1461.90px;top:77.84px;font-size:12px;line-height:12px;color:#444746;letter-spacing:0.05px;-webkit-text-stroke:0.3px #444746;">EXPORT</div>
<div class="r" style="left:510.00px;top:457.30px;width:827.00px;height:700.00px;background:#fff;border-radius:20px;"></div>
<svg class="r" style="left:531.30px;top:489.50px;" width="30.00" height="30.00" viewBox="0 0 30 30"><circle cx="15" cy="15" r="15" fill="#9e9e9e"/><rect x="13.6" y="13" width="2.8" height="9" fill="#fff"/><rect x="13.6" y="8.2" width="2.8" height="2.8" fill="#fff"/></svg>
<div class="t" style="left:586.60px;top:488.37px;font-size:20px;line-height:20px;color:#2a2c2f;">Why pages aren’t indexed</div>
<div class="t" style="left:586.60px;top:518.00px;font-size:13px;line-height:13px;color:#757575;letter-spacing:0.14px;">Pages that aren’t indexed can’t be served on Google</div>
<div class="r" style="left:1296.70px;top:500.70px;width:15.90px;height:1.80px;background:#3c4043;"></div>
<div class="r" style="left:1299.30px;top:505.60px;width:10.90px;height:1.80px;background:#3c4043;"></div>
<div class="r" style="left:1302.80px;top:510.10px;width:3.80px;height:1.80px;background:#3c4043;"></div>
<div class="t" style="left:532.20px;top:576.61px;font-size:10.5px;line-height:10.5px;color:#757575;">Reason</div>
<div class="t" style="left:874.80px;top:576.61px;font-size:10.5px;line-height:10.5px;color:#757575;">Source</div>
<svg class="r" style="left:918.00px;top:573.00px;" width="15.50" height="15.50" viewBox="0 0 24 24"><path fill="#8a8d91" d="M11 18h2v-2h-2v2zm1-16C6.48 2 2 6.48 2 12s4.48 10 10 10 10-4.48 10-10S17.52 2 12 2zm0 18c-4.41 0-8-3.59-8-8s3.59-8 8-8 8 3.59 8 8-3.59 8-8 8zm0-14c-2.21 0-4 1.79-4 4h2c0-1.1.9-2 2-2s2 .9 2 2c0 2-3 1.75-3 5h2c0-2.25 3-2.5 3-5 0-2.21-1.79-4-4-4z"/></svg>
<div class="t" style="left:1010.70px;top:576.36px;font-size:10.8px;line-height:10.8px;color:#1f1f1f;letter-spacing:0.2px;-webkit-text-stroke:0.3px #1f1f1f;">Validation</div>
<svg class="r" style="left:1064.40px;top:574.90px;" width="14.40" height="14.40" viewBox="0 0 24 24"><path fill="#1f1f1f" d="M20 12l-1.41-1.41L13 16.17V4h-2v12.17l-5.58-5.59L4 12l8 8 8-8z"/></svg>
<div class="t" style="left:1151.60px;top:576.61px;font-size:10.5px;line-height:10.5px;color:#757575;">Trend</div>
<div class="t" style="right:221.10px;top:576.61px;font-size:10.5px;line-height:10.5px;color:#757575;text-align:right;">Pages</div>
<div class="t" style="left:532.00px;top:622.51px;font-size:11.8px;line-height:11.8px;color:#1f1f1f;-webkit-text-stroke:0.3px #1f1f1f;">Page with redirect</div>
<div class="t" style="left:874.80px;top:622.77px;font-size:11.5px;line-height:11.5px;color:#3c4043;">Website</div>
<svg class="r" style="left:1012.20px;top:620.20px;" width="17.80" height="17.80" viewBox="0 0 24 24"><circle cx="12" cy="12" r="12" fill="#455a64"/><rect x="10.6" y="5.5" width="2.8" height="8.5" rx="0.6" fill="#fff"/><rect x="10.6" y="15.8" width="2.8" height="2.8" fill="#fff"/></svg>
<div class="t" style="left:1039.80px;top:622.68px;font-size:11.6px;line-height:11.6px;color:#1f1f1f;-webkit-text-stroke:0.3px #1f1f1f;">Not Started</div>
<svg class="r" style="left:0;top:0;overflow:visible" width="1" height="1"><polyline points="1150.70,627.90 1208.40,627.90" fill="none" stroke="#606468" stroke-width="1.5" stroke-linejoin="round"/></svg>
<div class="t" style="right:220.60px;top:622.77px;font-size:11.5px;line-height:11.5px;color:#3c4043;text-align:right;">140</div>
<div class="r" style="left:510.00px;top:652.28px;width:827.00px;height:1.00px;background:#e8eaed;"></div>
<div class="t" style="left:532.00px;top:667.94px;font-size:11.8px;line-height:11.8px;color:#1f1f1f;-webkit-text-stroke:0.3px #1f1f1f;">Alternative page with proper canonical tag</div>
<div class="t" style="left:874.80px;top:668.20px;font-size:11.5px;line-height:11.5px;color:#3c4043;">Website</div>
<svg class="r" style="left:1012.20px;top:665.63px;" width="17.80" height="17.80" viewBox="0 0 24 24"><circle cx="12" cy="12" r="12" fill="#455a64"/><rect x="10.6" y="5.5" width="2.8" height="8.5" rx="0.6" fill="#fff"/><rect x="10.6" y="15.8" width="2.8" height="2.8" fill="#fff"/></svg>
<div class="t" style="left:1039.80px;top:668.11px;font-size:11.6px;line-height:11.6px;color:#1f1f1f;-webkit-text-stroke:0.3px #1f1f1f;">Not Started</div>
<svg class="r" style="left:0;top:0;overflow:visible" width="1" height="1"><polyline points="1150.70,674.50 1167.40,674.50 1169.70,673.05 1198.50,673.05 1200.50,674.30 1206.00,674.30 1208.20,673.05" fill="none" stroke="#606468" stroke-width="1.5" stroke-linejoin="round"/></svg>
<div class="t" style="right:220.60px;top:668.20px;font-size:11.5px;line-height:11.5px;color:#3c4043;text-align:right;">127</div>
<div class="r" style="left:510.00px;top:697.71px;width:827.00px;height:1.00px;background:#e8eaed;"></div>
<div class="t" style="left:532.00px;top:713.37px;font-size:11.8px;line-height:11.8px;color:#1f1f1f;-webkit-text-stroke:0.3px #1f1f1f;">Excluded by ‘noindex’ tag</div>
<div class="t" style="left:874.80px;top:713.63px;font-size:11.5px;line-height:11.5px;color:#3c4043;">Website</div>
<svg class="r" style="left:1012.20px;top:711.06px;" width="17.80" height="17.80" viewBox="0 0 24 24"><circle cx="12" cy="12" r="12" fill="#455a64"/><rect x="10.6" y="5.5" width="2.8" height="8.5" rx="0.6" fill="#fff"/><rect x="10.6" y="15.8" width="2.8" height="2.8" fill="#fff"/></svg>
<div class="t" style="left:1039.80px;top:713.54px;font-size:11.6px;line-height:11.6px;color:#1f1f1f;-webkit-text-stroke:0.3px #1f1f1f;">Not Started</div>
<svg class="r" style="left:0;top:0;overflow:visible" width="1" height="1"><polyline points="1150.70,717.80 1172.00,717.80 1174.60,719.05 1176.90,717.30 1181.80,719.90 1184.40,718.50 1187.00,719.90 1208.30,719.90" fill="none" stroke="#606468" stroke-width="1.5" stroke-linejoin="round"/></svg>
<div class="t" style="right:220.60px;top:713.63px;font-size:11.5px;line-height:11.5px;color:#3c4043;text-align:right;">118</div>
<div class="r" style="left:510.00px;top:743.14px;width:827.00px;height:1.00px;background:#e8eaed;"></div>
<div class="t" style="left:532.00px;top:758.80px;font-size:11.8px;line-height:11.8px;color:#1f1f1f;-webkit-text-stroke:0.3px #1f1f1f;">Not found (404)</div>
<div class="t" style="left:874.80px;top:759.06px;font-size:11.5px;line-height:11.5px;color:#3c4043;">Website</div>
<svg class="r" style="left:1012.20px;top:756.49px;" width="17.80" height="17.80" viewBox="0 0 24 24"><circle cx="12" cy="12" r="12" fill="#455a64"/><rect x="10.6" y="5.5" width="2.8" height="8.5" rx="0.6" fill="#fff"/><rect x="10.6" y="15.8" width="2.8" height="2.8" fill="#fff"/></svg>
<div class="t" style="left:1039.80px;top:758.97px;font-size:11.6px;line-height:11.6px;color:#1f1f1f;-webkit-text-stroke:0.3px #1f1f1f;">Not Started</div>
<svg class="r" style="left:0;top:0;overflow:visible" width="1" height="1"><polyline points="1150.70,768.29 1208.40,768.29" fill="none" stroke="#606468" stroke-width="1.5" stroke-linejoin="round"/></svg>
<div class="t" style="right:220.60px;top:759.06px;font-size:11.5px;line-height:11.5px;color:#3c4043;text-align:right;">24</div>
<div class="r" style="left:510.00px;top:788.57px;width:827.00px;height:1.00px;background:#e8eaed;"></div>
<div class="t" style="left:532.00px;top:804.23px;font-size:11.8px;line-height:11.8px;color:#1f1f1f;-webkit-text-stroke:0.3px #1f1f1f;">Duplicate without user-selected canonical</div>
<div class="t" style="left:874.80px;top:804.49px;font-size:11.5px;line-height:11.5px;color:#3c4043;">Website</div>
<svg class="r" style="left:1012.20px;top:801.92px;" width="17.80" height="17.80" viewBox="0 0 24 24"><circle cx="12" cy="12" r="12" fill="#455a64"/><rect x="10.6" y="5.5" width="2.8" height="8.5" rx="0.6" fill="#fff"/><rect x="10.6" y="15.8" width="2.8" height="2.8" fill="#fff"/></svg>
<div class="t" style="left:1039.80px;top:804.40px;font-size:11.6px;line-height:11.6px;color:#1f1f1f;-webkit-text-stroke:0.3px #1f1f1f;">Not Started</div>
<svg class="r" style="left:0;top:0;overflow:visible" width="1" height="1"><polyline points="1150.70,812.52 1152.50,813.82 1208.40,813.82" fill="none" stroke="#606468" stroke-width="1.5" stroke-linejoin="round"/></svg>
<div class="t" style="right:220.60px;top:804.49px;font-size:11.5px;line-height:11.5px;color:#3c4043;text-align:right;">17</div>
<div class="r" style="left:510.00px;top:834.00px;width:827.00px;height:1.00px;background:#e8eaed;"></div>
<div class="t" style="left:532.00px;top:849.66px;font-size:11.8px;line-height:11.8px;color:#1f1f1f;-webkit-text-stroke:0.3px #1f1f1f;">Soft 404</div>
<div class="t" style="left:874.80px;top:849.92px;font-size:11.5px;line-height:11.5px;color:#3c4043;">Website</div>
<svg class="r" style="left:1012.20px;top:847.35px;" width="17.80" height="17.80" viewBox="0 0 24 24"><circle cx="12" cy="12" r="12" fill="#455a64"/><rect x="10.6" y="5.5" width="2.8" height="8.5" rx="0.6" fill="#fff"/><rect x="10.6" y="15.8" width="2.8" height="2.8" fill="#fff"/></svg>
<div class="t" style="left:1039.80px;top:849.83px;font-size:11.6px;line-height:11.6px;color:#1f1f1f;-webkit-text-stroke:0.3px #1f1f1f;">Not Started</div>
<svg class="r" style="left:0;top:0;overflow:visible" width="1" height="1"><polyline points="1150.70,860.25 1208.40,860.25" fill="none" stroke="#606468" stroke-width="1.5" stroke-linejoin="round"/></svg>
<div class="t" style="right:220.60px;top:849.92px;font-size:11.5px;line-height:11.5px;color:#3c4043;text-align:right;">5</div>
<div class="r" style="left:510.00px;top:879.43px;width:827.00px;height:1.00px;background:#e8eaed;"></div>
<div class="t" style="left:532.00px;top:895.09px;font-size:11.8px;line-height:11.8px;color:#1f1f1f;-webkit-text-stroke:0.3px #1f1f1f;">Blocked due to access forbidden (403)</div>
<div class="t" style="left:874.80px;top:895.35px;font-size:11.5px;line-height:11.5px;color:#3c4043;">Website</div>
<svg class="r" style="left:1012.20px;top:892.78px;" width="17.80" height="17.80" viewBox="0 0 24 24"><circle cx="12" cy="12" r="12" fill="#455a64"/><rect x="10.6" y="5.5" width="2.8" height="8.5" rx="0.6" fill="#fff"/><rect x="10.6" y="15.8" width="2.8" height="2.8" fill="#fff"/></svg>
<div class="t" style="left:1039.80px;top:895.26px;font-size:11.6px;line-height:11.6px;color:#1f1f1f;-webkit-text-stroke:0.3px #1f1f1f;">Not Started</div>
<svg class="r" style="left:0;top:0;overflow:visible" width="1" height="1"><polyline points="1150.70,905.68 1208.40,905.68" fill="none" stroke="#606468" stroke-width="1.5" stroke-linejoin="round"/></svg>
<div class="t" style="right:220.60px;top:895.35px;font-size:11.5px;line-height:11.5px;color:#3c4043;text-align:right;">1</div>
<div class="r" style="left:510.00px;top:924.86px;width:827.00px;height:1.00px;background:#e8eaed;"></div>
<div class="t" style="left:532.00px;top:940.52px;font-size:11.8px;line-height:11.8px;color:#1f1f1f;-webkit-text-stroke:0.3px #1f1f1f;">Blocked by robots.txt</div>
<div class="t" style="left:874.80px;top:940.78px;font-size:11.5px;line-height:11.5px;color:#3c4043;">Website</div>
<svg class="r" style="left:1012.20px;top:938.21px;" width="17.80" height="17.80" viewBox="0 0 24 24"><circle cx="12" cy="12" r="12" fill="#455a64"/><rect x="10.6" y="5.5" width="2.8" height="8.5" rx="0.6" fill="#fff"/><rect x="10.6" y="15.8" width="2.8" height="2.8" fill="#fff"/></svg>
<div class="t" style="left:1039.80px;top:940.69px;font-size:11.6px;line-height:11.6px;color:#1f1f1f;-webkit-text-stroke:0.3px #1f1f1f;">Not Started</div>
<svg class="r" style="left:0;top:0;overflow:visible" width="1" height="1"><polyline points="1150.70,950.81 1208.40,950.81" fill="none" stroke="#606468" stroke-width="1.5" stroke-linejoin="round"/></svg>
<div class="t" style="right:220.60px;top:940.78px;font-size:11.5px;line-height:11.5px;color:#3c4043;text-align:right;">1</div>
<div class="r" style="left:510.00px;top:970.29px;width:827.00px;height:1.00px;background:#e8eaed;"></div>
<div class="t" style="left:532.00px;top:985.95px;font-size:11.8px;line-height:11.8px;color:#1f1f1f;-webkit-text-stroke:0.3px #1f1f1f;">Crawled - currently not indexed</div>
<div class="t" style="left:874.80px;top:986.21px;font-size:11.5px;line-height:11.5px;color:#3c4043;">Google systems</div>
<svg class="r" style="left:1012.20px;top:983.64px;" width="17.80" height="17.80" viewBox="0 0 24 24"><circle cx="12" cy="12" r="12" fill="#455a64"/><rect x="10.6" y="5.5" width="2.8" height="8.5" rx="0.6" fill="#fff"/><rect x="10.6" y="15.8" width="2.8" height="2.8" fill="#fff"/></svg>
<div class="t" style="left:1039.80px;top:986.12px;font-size:11.6px;line-height:11.6px;color:#1f1f1f;-webkit-text-stroke:0.3px #1f1f1f;">Not Started</div>
<svg class="r" style="left:0;top:0;overflow:visible" width="1" height="1"><polyline points="1150.50,983.74 1152.50,985.04 1154.80,983.44 1158.20,985.04 1162.30,983.74 1165.00,985.04 1167.30,983.44 1177.80,983.74 1179.40,985.04 1182.80,983.44 1186.00,984.84 1197.00,984.64 1198.30,985.74 1202.00,985.94 1203.30,986.64 1208.40,986.64" fill="none" stroke="#606468" stroke-width="1.5" stroke-linejoin="round"/></svg>
<div class="t" style="right:220.60px;top:986.21px;font-size:11.5px;line-height:11.5px;color:#3c4043;text-align:right;">253</div>
<div class="r" style="left:510.00px;top:1015.72px;width:827.00px;height:1.00px;background:#e8eaed;"></div>
<div class="t" style="left:532.00px;top:1031.38px;font-size:11.8px;line-height:11.8px;color:#1f1f1f;-webkit-text-stroke:0.3px #1f1f1f;">Duplicate, Google chose different canonical than user</div>
<div class="t" style="left:874.80px;top:1031.64px;font-size:11.5px;line-height:11.5px;color:#3c4043;">Google systems</div>
<svg class="r" style="left:1012.20px;top:1029.07px;" width="17.80" height="17.80" viewBox="0 0 24 24"><circle cx="12" cy="12" r="12" fill="#455a64"/><rect x="10.6" y="5.5" width="2.8" height="8.5" rx="0.6" fill="#fff"/><rect x="10.6" y="15.8" width="2.8" height="2.8" fill="#fff"/></svg>
<div class="t" style="left:1039.80px;top:1031.55px;font-size:11.6px;line-height:11.6px;color:#1f1f1f;-webkit-text-stroke:0.3px #1f1f1f;">Not Started</div>
<svg class="r" style="left:0;top:0;overflow:visible" width="1" height="1"><polyline points="1150.70,1041.77 1208.40,1041.77" fill="none" stroke="#606468" stroke-width="1.5" stroke-linejoin="round"/></svg>
<div class="t" style="right:220.60px;top:1031.64px;font-size:11.5px;line-height:11.5px;color:#3c4043;text-align:right;">1</div>
<div class="r" style="left:504.00px;top:606.30px;width:838.50px;height:47.70px;box-sizing:border-box;border:4.2px solid #ee3b17;"></div>
<div class="r" style="left:1527.00px;top:114.00px;width:9.00px;height:929.00px;background:#fafafa;border-left:1px solid #e9eaec;box-sizing:border-box;"></div>
<div class="r" style="left:1530.00px;top:324.00px;width:8.00px;height:730.00px;background:#c1c1c1;border-radius:4px;"></div>
</body></html>
